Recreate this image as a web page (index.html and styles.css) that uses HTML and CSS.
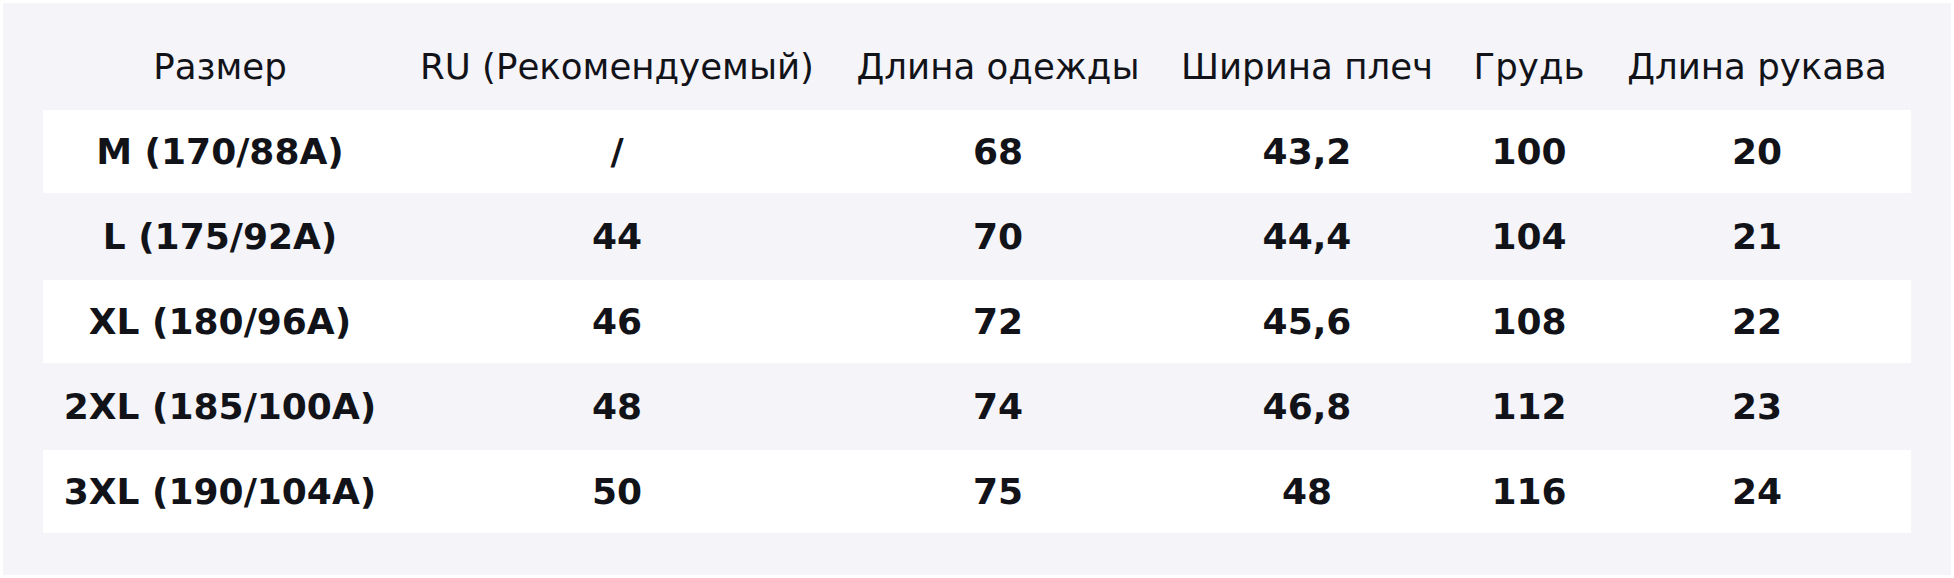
FILE: index.html
```html
<!DOCTYPE html>
<html lang="ru">
<head>
<meta charset="utf-8">
<link rel="stylesheet" href="styles.css">
</head>
<body>
<div class="sheet">
  <div class="row head">
    <div class="cell">Размер</div>
    <div class="cell">RU (Рекомендуемый)</div>
    <div class="cell">Длина одежды</div>
    <div class="cell">Ширина плеч</div>
    <div class="cell">Грудь</div>
    <div class="cell">Длина рукава</div>
  </div>
  <div class="body">
    <div class="row">
      <div class="cell">M (170/88A)</div>
      <div class="cell">/</div>
      <div class="cell">68</div>
      <div class="cell">43,2</div>
      <div class="cell">100</div>
      <div class="cell">20</div>
    </div>
    <div class="row">
      <div class="cell">L (175/92A)</div>
      <div class="cell">44</div>
      <div class="cell">70</div>
      <div class="cell">44,4</div>
      <div class="cell">104</div>
      <div class="cell">21</div>
    </div>
    <div class="row">
      <div class="cell">XL (180/96A)</div>
      <div class="cell">46</div>
      <div class="cell">72</div>
      <div class="cell">45,6</div>
      <div class="cell">108</div>
      <div class="cell">22</div>
    </div>
    <div class="row">
      <div class="cell">2XL (185/100A)</div>
      <div class="cell">48</div>
      <div class="cell">74</div>
      <div class="cell">46,8</div>
      <div class="cell">112</div>
      <div class="cell">23</div>
    </div>
    <div class="row">
      <div class="cell">3XL (190/104A)</div>
      <div class="cell">50</div>
      <div class="cell">75</div>
      <div class="cell">48</div>
      <div class="cell">116</div>
      <div class="cell">24</div>
    </div>
  </div>
</div>
</body>
</html>
```

FILE: styles.css
```css
html, body {
  margin: 0;
  padding: 0;
  background: #ffffff;
}
body {
  padding: 3px;
  font-family: "DejaVu Sans", "Noto Sans", sans-serif;
  color: #121319;
}
.sheet {
  width: 1948px;
  height: 572px;
  box-sizing: border-box;
  background: #f4f4f9;
  padding: 20px 40px 42px;
}
.row {
  display: grid;
  grid-template-columns: 354px 440px 322px 296px 148px 308px;
  align-items: center;
  height: 87px;
}
.cell {
  text-align: center;
  white-space: nowrap;
}
.head .cell {
  font-size: 35.6px;
  font-weight: normal;
}
.body .row {
  font-size: 36px;
  font-weight: bold;
}
.body .row:nth-child(odd) {
  background: #ffffff;
  height: 83px;
}
```
